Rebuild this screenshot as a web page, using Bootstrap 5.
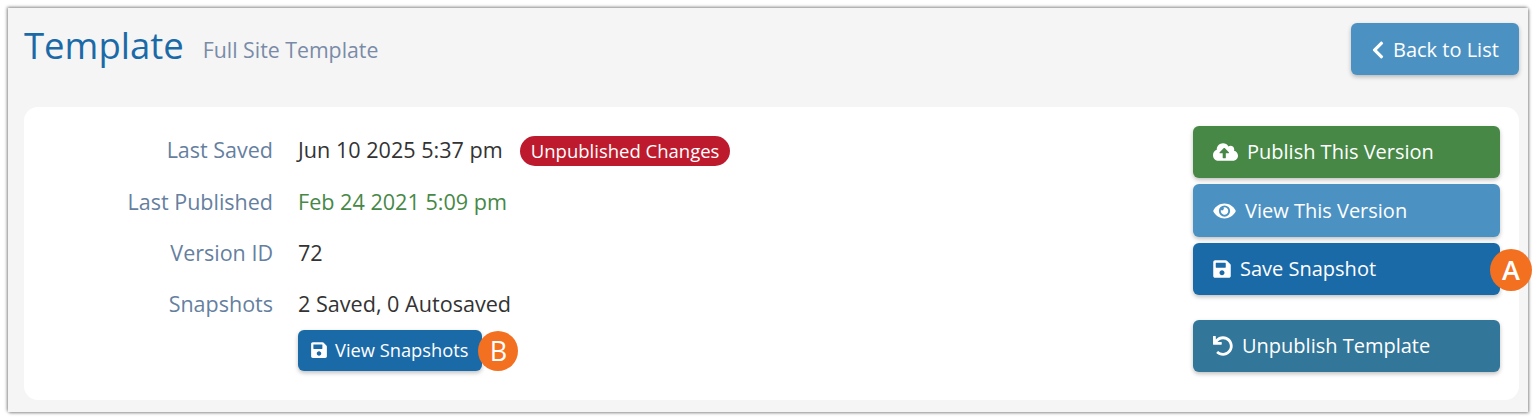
<!DOCTYPE html>
<html lang="en">
<head>
<meta charset="utf-8">
<title>Template</title>
<link href="https://cdn.jsdelivr.net/npm/bootstrap@5.3.0/dist/css/bootstrap.min.css" rel="stylesheet">
<style>
html,body{height:100%;}
body{background:#fff;font-family:"Open Sans","Noto Sans",sans-serif;color:#333;padding:8px;overflow:hidden;}
.tpl-frame{width:1520px;height:404px;background:#f5f5f5;padding:15px 9px 12px 16px;box-shadow:-1px -1px 3px rgba(0,0,0,.4),1px 1px 3px rgba(0,0,0,.4);}
.tpl-head{height:52px;margin-bottom:32px;}
.tpl-title{font-size:36.5px;line-height:44px;color:#1b6aa8;font-weight:400;margin:0;}
.tpl-sub{font-size:21.3px;color:#7a8ba8;margin-left:19px;padding-top:10px;}
.tpl-panel{height:293px;background:#fff;border:0;border-radius:14px;padding:19px 19px 0 0;}
.tpl-label{width:249px;text-align:right;color:#667f9f;font-size:21.5px;margin-right:25px;}
.tpl-value{font-size:21.6px;color:#333;}
.tpl-line{height:51.3px;line-height:48px;}
.tpl-line-shift{padding-top:1px;}
.tpl-green{color:#478847;}
.tpl-pill{background:#bd1a2e;color:#fff;font-size:18.5px;font-weight:400;line-height:30px;border-radius:15px;padding:0 11px;margin-left:17px;display:inline-block;vertical-align:0;}
.tpl-btn{font-size:20px;line-height:28px;color:#fff;border:0;border-radius:6px;box-shadow:0 2px 4px rgba(0,0,0,.25);text-align:left;display:flex;align-items:center;}
.tpl-btn:hover,.tpl-btn:active{color:#fff;}
.tpl-wide{width:307px;height:52.3px;padding:0 20px;}
.tpl-back{width:168px;height:52px;padding:2px 20px 0;background:#4b92c3;}
.tpl-green-bg{background:#478847;}
.tpl-light-bg{background:#4b92c3;}
.tpl-dark-bg{background:#1b6aa8;}
.tpl-teal-bg{background:#327699;}
.tpl-small{display:inline-flex;vertical-align:top;font-size:18.3px;height:41px;padding:0 14px 0 13px;background:#1b6aa8;line-height:24px;margin-top:2px;}
.tpl-ico{fill:currentColor;flex:none;margin-right:9px;}
.tpl-tight{margin-right:8px;}
.tpl-actions{width:307px;}
.tpl-gap{margin-bottom:6.1px;}
.tpl-gap-lg{margin-bottom:25px;}
.tpl-mark{position:absolute;width:42px;height:42px;border-radius:50%;background:#f37021;color:#fff;font-size:27px;font-weight:600;line-height:42px;text-align:center;top:calc(50% + 1px);transform:translateY(-50%);}
.tpl-mark-a{right:-32px;}
.tpl-mark-b{width:40px;height:40px;line-height:40px;right:-36px;font-weight:400;}
</style>
</head>
<body>
<div class="tpl-frame">
  <div class="tpl-head d-flex justify-content-between align-items-start">
    <div class="d-flex align-items-center">
      <h1 class="tpl-title">Template</h1>
      <span class="tpl-sub">Full Site Template</span>
    </div>
    <a class="btn tpl-btn tpl-back" href="#">
      <svg class="tpl-ico tpl-tight" width="14" height="20" viewBox="0 0 320 512"><path d="M34.52 239.03L228.87 44.69c9.37-9.37 24.57-9.37 33.94 0l22.67 22.67c9.36 9.36 9.37 24.52.04 33.9L131.49 256l154.02 154.75c9.34 9.38 9.32 24.54-.04 33.9l-22.67 22.67c-9.37 9.37-24.57 9.37-33.94 0L34.52 272.97c-9.37-9.37-9.37-24.57 0-33.94z"/></svg>Back to List
    </a>
  </div>
  <div class="card tpl-panel d-flex flex-row justify-content-between">
    <div>
      <div class="d-flex tpl-line"><div class="tpl-label">Last Saved</div><div class="tpl-value">Jun 10 2025 5:37 pm<span class="tpl-pill">Unpublished Changes</span></div></div>
      <div class="d-flex tpl-line tpl-line-shift"><div class="tpl-label">Last Published</div><div class="tpl-value tpl-green">Feb 24 2021 5:09 pm</div></div>
      <div class="d-flex tpl-line"><div class="tpl-label">Version ID</div><div class="tpl-value">72</div></div>
      <div class="d-flex tpl-line"><div class="tpl-label">Snapshots</div>
        <div class="tpl-value">2 Saved, 0 Autosaved<br>
          <a class="btn tpl-btn tpl-small position-relative" href="#">
            <svg class="tpl-ico tpl-tight" width="16" height="18" viewBox="0 0 448 512"><path d="M433.941 129.941l-83.882-83.882A48 48 0 0 0 316.118 32H48C21.49 32 0 53.49 0 80v352c0 26.51 21.49 48 48 48h352c26.51 0 48-21.49 48-48V163.882a48 48 0 0 0-14.059-33.941zM224 416c-35.346 0-64-28.654-64-64 0-35.346 28.654-64 64-64s64 28.654 64 64c0 35.346-28.654 64-64 64zm96-304.52V212c0 6.627-5.373 12-12 12H76c-6.627 0-12-5.373-12-12V108c0-6.627 5.373-12 12-12h228.52c3.183 0 6.235 1.264 8.485 3.515l3.48 3.48A11.996 11.996 0 0 1 320 111.48z"/></svg>View Snapshots<span class="tpl-mark tpl-mark-b">B</span>
          </a>
        </div>
      </div>
    </div>
    <div class="tpl-actions d-flex flex-column">
      <a class="btn tpl-btn tpl-wide tpl-green-bg tpl-gap" href="#">
        <svg class="tpl-ico" width="25" height="20" viewBox="0 0 640 512"><path d="M537.6 226.6c4.1-10.7 6.4-22.4 6.4-34.6 0-53-43-96-96-96-19.7 0-38.1 6-53.3 16.2C367 64.2 315.3 32 256 32c-88.4 0-160 71.6-160 160 0 2.7.1 5.4.2 8.1C40.2 219.8 0 273.2 0 336c0 79.5 64.5 144 144 144h368c70.7 0 128-57.3 128-128 0-61.9-44-113.6-102.4-125.4zM393.4 288H328v112c0 8.8-7.2 16-16 16h-48c-8.8 0-16-7.2-16-16V288h-65.4c-14.3 0-21.4-17.2-11.3-27.3l105.4-105.4c6.2-6.2 16.4-6.2 22.6 0l105.4 105.4c10.1 10.1 2.9 27.3-11.3 27.3z"/></svg>Publish This Version
      </a>
      <a class="btn tpl-btn tpl-wide tpl-light-bg tpl-gap" href="#">
        <svg class="tpl-ico" width="23" height="20" viewBox="0 0 576 512"><path d="M572.52 241.4C518.29 135.59 410.93 64 288 64S57.68 135.64 3.48 241.41a32.35 32.35 0 0 0 0 29.19C57.71 376.41 165.07 448 288 448s230.32-71.64 284.52-177.41a32.35 32.35 0 0 0 0-29.19zM288 400a144 144 0 1 1 144-144 143.93 143.93 0 0 1-144 144zm0-240a95.31 95.31 0 0 0-25.31 3.79 47.85 47.85 0 0 1-66.9 66.9A95.78 95.78 0 1 0 288 160z"/></svg>View This Version
      </a>
      <a class="btn tpl-btn tpl-wide tpl-dark-bg tpl-gap-lg position-relative" href="#">
        <svg class="tpl-ico" width="18" height="20" viewBox="0 0 448 512"><path d="M433.941 129.941l-83.882-83.882A48 48 0 0 0 316.118 32H48C21.49 32 0 53.49 0 80v352c0 26.51 21.49 48 48 48h352c26.51 0 48-21.49 48-48V163.882a48 48 0 0 0-14.059-33.941zM224 416c-35.346 0-64-28.654-64-64 0-35.346 28.654-64 64-64s64 28.654 64 64c0 35.346-28.654 64-64 64zm96-304.52V212c0 6.627-5.373 12-12 12H76c-6.627 0-12-5.373-12-12V108c0-6.627 5.373-12 12-12h228.52c3.183 0 6.235 1.264 8.485 3.515l3.48 3.48A11.996 11.996 0 0 1 320 111.48z"/></svg>Save Snapshot<span class="tpl-mark tpl-mark-a">A</span>
      </a>
      <a class="btn tpl-btn tpl-wide tpl-teal-bg" href="#">
        <svg class="tpl-ico" width="20" height="20" viewBox="0 0 512 512"><path d="M212.333 224.333H12c-6.627 0-12-5.373-12-12V12C0 5.373 5.373 0 12 0h48c6.627 0 12 5.373 12 12v78.112C117.773 39.279 184.26 7.47 258.175 8.007c136.906.994 246.448 111.623 246.157 248.532C504.041 393.258 393.12 504 256.333 504c-64.089 0-122.496-24.313-166.51-64.215-5.099-4.622-5.334-12.554-.467-17.42l33.967-33.967c4.474-4.474 11.662-4.717 16.401-.525C170.76 415.336 211.58 432 256.333 432c97.268 0 176-78.716 176-176 0-97.267-78.716-176-176-176-58.496 0-110.28 28.476-142.274 72.333h98.274c6.627 0 12 5.373 12 12v48c0 6.627-5.373 12-12 12z"/></svg>Unpublish Template
      </a>
    </div>
  </div>
</div>
<script src="https://cdn.jsdelivr.net/npm/bootstrap@5.3.0/dist/js/bootstrap.bundle.min.js"></script>
</body>
</html>
